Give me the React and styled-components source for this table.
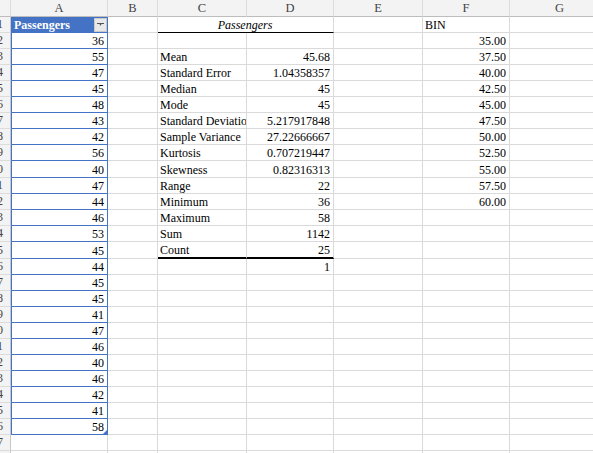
import React from "react";
import styled, { createGlobalStyle } from "styled-components";

const GlobalStyle = createGlobalStyle`
    html, body { margin: 0; padding: 0; background: #fff; }
    body { font-family: "Liberation Serif", "Times New Roman", serif; overflow: hidden; }
`;

const COLS = [11, 97, 50, 89, 87, 89, 87, 100];
const LETTERS = ["", "A", "B", "C", "D", "E", "F", "G"];
const GRID = "#dadada";
const BLUE = "#4472c4";

const passengers = [36, 55, 47, 45, 48, 43, 42, 56, 40, 47, 44, 46, 53, 45, 44, 45, 45, 41, 47, 46, 40, 46, 42, 41, 58];

const stats = [
    ["Mean", "45.68"],
    ["Standard Error", "1.04358357"],
    ["Median", "45"],
    ["Mode", "45"],
    ["Standard Deviation", "5.217917848"],
    ["Sample Variance", "27.22666667"],
    ["Kurtosis", "0.707219447"],
    ["Skewness", "0.82316313"],
    ["Range", "22"],
    ["Minimum", "36"],
    ["Maximum", "58"],
    ["Sum", "1142"],
    ["Count", "25"],
];

const bins = ["35.00", "37.50", "40.00", "42.50", "45.00", "47.50", "50.00", "52.50", "55.00", "57.50", "60.00"];

const Sheet = styled.div`
    width: 593px;
    height: 453px;
    overflow: hidden;
    font-size: 12px;
    color: #000;
`;

const Row = styled.div`
    display: flex;
    height: ${(p) => p.$h}px;
`;

const HeadCell = styled.div`
    box-sizing: border-box;
    flex: 0 0 ${(p) => p.$w}px;
    background: #f3f3f3;
    border-right: 1px solid #dcdcdc;
    border-bottom: 1px solid #bdbdbd;
    color: #444;
    font-size: 12.5px;
    display: flex;
    align-items: center;
    justify-content: center;
`;

// row numbers sit in a column too narrow for them, so only their right edge shows
const RowNum = styled.div`
    box-sizing: border-box;
    flex: 0 0 11px;
    background: #f3f3f3;
    border-right: 1px solid #c8c8c8;
    border-bottom: 1px solid #dcdcdc;
    color: #444;
    overflow: hidden;
    display: flex;
    align-items: center;
    justify-content: flex-end;
    padding-right: 7px;
    white-space: nowrap;
`;

const Cell = styled.div`
    box-sizing: border-box;
    position: relative;
    flex: 0 0 ${(p) => p.$w}px;
    border-right: 1px solid ${(p) => p.$right || GRID};
    border-bottom: ${(p) => p.$bottom || `1px solid ${GRID}`};
    ${(p) => p.$left && `border-left: 1px solid ${p.$left};`}
    background: ${(p) => p.$bg || "transparent"};
    color: ${(p) => p.$color || "#000"};
    font-weight: ${(p) => (p.$bold ? 700 : 400)};
    font-style: ${(p) => (p.$italic ? "italic" : "normal")};
    display: flex;
    align-items: flex-end;
    justify-content: ${(p) => p.$align || "flex-start"};
    padding: 0 3px 0 2px;
    line-height: 14px;
    white-space: nowrap;
    overflow: hidden;
`;

const FilterButton = styled.div`
    position: absolute;
    right: 0;
    top: 1px;
    width: 13px;
    height: 14px;
    box-sizing: border-box;
    background: #e9e9e9;
    border: 1px solid #c9c9c9;
    display: flex;
    align-items: center;
    justify-content: center;
`;

const ResizeHandle = styled.div`
    position: absolute;
    right: 0;
    bottom: 0;
    width: 0;
    height: 0;
    border-left: 4px solid transparent;
    border-bottom: 4px solid ${BLUE};
`;

function rowHeight(r) {
    return r === 10 || r === 15 ? 17 : 16;
}

function ColumnA({ r }) {
    if (r === 1) {
        return (
            <Cell $w={COLS[1]} $bg={BLUE} $color="#fff" $bold $left={BLUE} $right={BLUE} $bottom={`1px solid ${BLUE}`}>
                Passengers
                <FilterButton>
                    <svg width="7" height="4" viewBox="0 0 7 4">
                        <path d="M0 0h7v1H4.5L3.5 3 2.5 1H0z" fill="#555" />
                    </svg>
                </FilterButton>
            </Cell>
        );
    }
    if (r <= 26) {
        return (
            <Cell $w={COLS[1]} $align="flex-end" $left={BLUE} $right={BLUE} $bottom={`1px solid ${BLUE}`}>
                {passengers[r - 2]}
                {r === 26 && <ResizeHandle />}
            </Cell>
        );
    }
    return <Cell $w={COLS[1]} />;
}

function StatCells({ r }) {
    if (r === 1) {
        return (
            <Cell $w={COLS[3] + COLS[4]} $align="center" $italic $bottom="1px solid #000">
                Passengers
            </Cell>
        );
    }
    const stat = stats[r - 3];
    const thick = r === 15 ? "2px solid #000" : undefined;
    return (
        <>
            <Cell $w={COLS[3]} $bottom={thick}>{stat ? stat[0] : ""}</Cell>
            <Cell $w={COLS[4]} $align="flex-end" $bottom={thick}>
                {stat ? stat[1] : r === 16 ? "1" : ""}
            </Cell>
        </>
    );
}

function BinCell({ r }) {
    if (r === 1) return <Cell $w={COLS[6]}>BIN</Cell>;
    return (
        <Cell $w={COLS[6]} $align="flex-end">
            {bins[r - 2] || ""}
        </Cell>
    );
}

export default function App() {
    const rows = Array.from({ length: 28 }, (_, i) => i + 1);

    return (
        <Sheet>
            <GlobalStyle />
            <Row $h={17}>
                {COLS.map((w, i) => (
                    <HeadCell key={i} $w={w}>{LETTERS[i]}</HeadCell>
                ))}
            </Row>
            {rows.map((r) => (
                <Row key={r} $h={rowHeight(r)}>
                    <RowNum>{r}</RowNum>
                    <ColumnA r={r} />
                    <Cell $w={COLS[2]} />
                    <StatCells r={r} />
                    <Cell $w={COLS[5]} />
                    <BinCell r={r} />
                    <Cell $w={COLS[7]} />
                </Row>
            ))}
        </Sheet>
    );
}
